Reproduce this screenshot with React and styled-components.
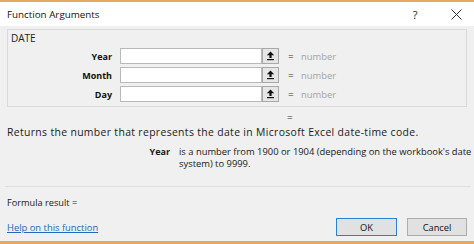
import React from "react";
import styled, { createGlobalStyle } from "styled-components";

const Global = createGlobalStyle`
  html, body { margin: 0; padding: 0; background: #f0f0f0; }
  body { font-family: "Open Sans", "Noto Sans", "Liberation Sans", sans-serif; }
  * { box-sizing: border-box; }
`;

const Dialog = styled.div`
  width: 474px;
  height: 244px;
  background: #f0f0f0;
  border-top: 2px solid #e9a85e;
  border-bottom: 3px solid #e9a85e;
  display: flex;
  flex-direction: column;
  font-size: 9.4px;
  color: #1a1a1a;
  overflow: hidden;
`;

const TitleBar = styled.div`
  height: 24px;
  background: #ffffff;
  display: flex;
  align-items: center;
  padding: 0 7px;
  flex-shrink: 0;
`;

const Title = styled.div`
  flex: 1;
  font-size: 9.8px;
  color: #111;
`;

const TitleButton = styled.div`
  width: ${(p) => p.$w}px;
  height: 24px;
  display: flex;
  align-items: center;
  justify-content: center;
  font-size: 11px;
  color: #222;
`;

const Body = styled.div`
  flex: 1;
  display: flex;
  flex-direction: column;
  padding: 0 7px;
`;

const GroupBox = styled.div`
  margin-top: 3px;
  height: 78px;
  border: 1px solid #dadada;
  padding: 1px 0 0 3px;
  display: flex;
  flex-direction: column;
`;

const GroupLabel = styled.div`
  height: 14px;
  line-height: 14px;
  font-size: 10px;
  color: #222;
`;

const Rows = styled.div`
  margin-top: 3px;
  display: flex;
  flex-direction: column;
  gap: 3px;
`;

const ArgRow = styled.div`
  display: flex;
  align-items: center;
  height: 16px;
`;

const ArgLabel = styled.div`
  width: 101px;
  text-align: right;
  font-weight: 700;
  font-size: 9px;
  color: #111;
`;

const InputWrap = styled.div`
  margin-left: 8px;
  display: flex;
  height: 16px;
`;

const TextBox = styled.div`
  width: 142px;
  height: 16px;
  background: #fff;
  border: 1px solid #b9b9b9;
`;

const RefButton = styled.div`
  width: 17px;
  height: 16px;
  background: #e6e6e6;
  border: 1px solid #a8a8a8;
  display: flex;
  align-items: center;
  justify-content: center;
`;

const Equals = styled.div`
  margin-left: ${(p) => p.$ml}px;
  width: 13px;
  font-size: 10px;
  color: #333;
`;

const Placeholder = styled.div`
  color: #a3a3a3;
  font-size: 9.4px;
`;

const ResultLine = styled.div`
  margin-top: 3px;
  height: 14px;
  line-height: 14px;
  display: flex;
`;

const Description = styled.div`
  margin-top: 1px;
  height: 14px;
  line-height: 14px;
  font-size: 10.4px;
  letter-spacing: 0.35px;
  white-space: nowrap;
`;

const ArgHelp = styled.div`
  margin-top: 7px;
  display: flex;
  line-height: 11.5px;
`;

const ArgHelpName = styled.div`
  width: 163px;
  text-align: right;
  font-weight: 700;
  flex-shrink: 0;
  font-size: 9px;
`;

const ArgHelpText = styled.div`
  margin-left: 9px;
  white-space: nowrap;
  font-size: 9.4px;
`;

const Separator = styled.div`
  margin: 17px -4px 0 -2px;
  height: 1px;
  background: #dedede;
`;

const FormulaResult = styled.div`
  margin-top: 9px;
  height: 14px;
  line-height: 14px;
  font-size: 9.2px;
`;

const Footer = styled.div`
  margin-top: 8px;
  display: flex;
  align-items: center;
  height: 18px;
`;

const HelpLink = styled.a`
  flex: 1;
  color: #2a66b8;
  text-decoration: underline;
  font-size: 9.4px;
  cursor: pointer;
`;

const Button = styled.div`
  width: ${(p) => p.$w}px;
  height: 18px;
  margin-left: ${(p) => p.$ml}px;
  background: #e1e1e1;
  border: 1px solid ${(p) => (p.$primary ? "#2f7fd0" : "#adadad")};
  display: flex;
  align-items: center;
  justify-content: center;
  font-size: 9.3px;
  color: #111;
`;

const UpArrow = () => (
  <svg width="9" height="10" viewBox="0 0 9 10">
    <polygon points="4.5,0.5 8.2,4.3 5.6,4.3 5.6,7 3.4,7 3.4,4.3 0.8,4.3" fill="#111" />
    <rect x="1" y="8" width="7" height="1.2" fill="#111" />
  </svg>
);

const CloseIcon = () => (
  <svg width="11" height="11" viewBox="0 0 11 11">
    <path d="M0.5 0.5 L10.5 10.5 M10.5 0.5 L0.5 10.5" stroke="#333" strokeWidth="1" fill="none" />
  </svg>
);

const args = ["Year", "Month", "Day"];

export default function App() {
  return (
    <>
      <Global />
      <Dialog>
        <TitleBar>
          <Title>Function Arguments</Title>
          <TitleButton $w={20}>?</TitleButton>
          <TitleButton $w={20} />
          <TitleButton $w={22}>
            <CloseIcon />
          </TitleButton>
        </TitleBar>
        <Body>
          <GroupBox>
            <GroupLabel>DATE</GroupLabel>
            <Rows>
              {args.map((a) => (
                <ArgRow key={a}>
                  <ArgLabel>{a}</ArgLabel>
                  <InputWrap>
                    <TextBox />
                    <RefButton>
                      <UpArrow />
                    </RefButton>
                  </InputWrap>
                  <Equals $ml={9}>=</Equals>
                  <Placeholder>number</Placeholder>
                </ArgRow>
              ))}
            </Rows>
          </GroupBox>
          <ResultLine>
            <Equals $ml={280}>=</Equals>
          </ResultLine>
          <Description>
            Returns the number that represents the date in Microsoft Excel date-time code.
          </Description>
          <ArgHelp>
            <ArgHelpName>Year</ArgHelpName>
            <ArgHelpText>
              is a number from 1900 or 1904 (depending on the workbook's date
              <br />
              system) to 9999.
            </ArgHelpText>
          </ArgHelp>
          <Separator />
          <FormulaResult>Formula result =</FormulaResult>
          <Footer>
            <HelpLink>Help on this function</HelpLink>
            <Button $w={61} $ml={0} $primary>OK</Button>
            <Button $w={60} $ml={10}>Cancel</Button>
          </Footer>
        </Body>
      </Dialog>
    </>
  );
}
